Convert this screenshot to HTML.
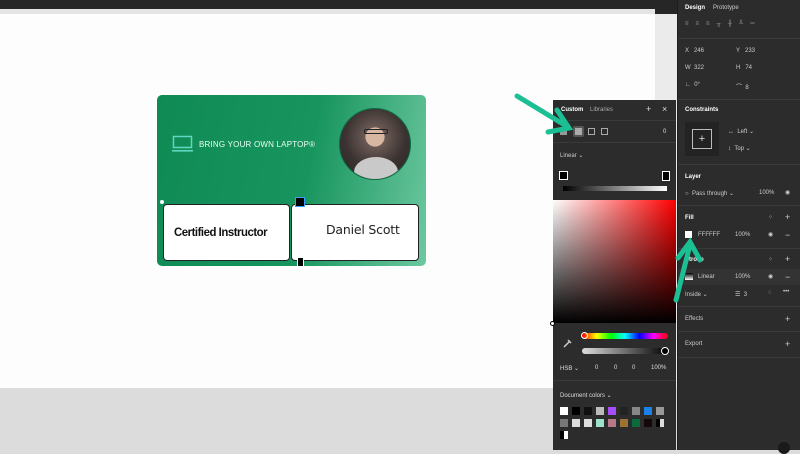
<!DOCTYPE html>
<html><head><meta charset="utf-8"><style>
*{margin:0;padding:0;box-sizing:border-box}
body{width:800px;height:450px;overflow:hidden;background:#dcdcdc;font-family:"Liberation Sans",sans-serif;position:relative}
.a{position:absolute}
.t{color:#ddd;font-size:6px;position:absolute}
.rp .t{color:#ccc}
.h{color:#fff;font-weight:bold;font-size:6px;position:absolute}
</style></head><body>
<div class="a" style="left:0;top:0;width:677px;height:14px;background:#262626"></div>
<div class="a" style="left:0;top:14px;width:655px;height:374px;background:#fdfdfd"></div>
<div class="a" style="left:0;top:9px;width:655px;height:5px;background:#e4e4e4"></div>
<div class="a" style="left:655px;top:14px;width:22px;height:374px;background:#ebebeb"></div>

<!-- card -->
<div class="a" style="left:157px;top:95px;width:269px;height:171px;border-radius:5px;background:linear-gradient(100deg,#0f8a55 0%,#18955e 55%,#6cc8a0 100%)"></div>
<svg class="a" style="left:172px;top:135px" width="22" height="18"><rect x="1.5" y="1.5" width="18" height="11" fill="none" stroke="#5fd8c0" stroke-width="1.5"/><rect x="0" y="15" width="21" height="1.6" fill="#5fd8c0"/></svg>
<div class="a" style="left:199px;top:140px;color:#e8fff4;font-size:8px;letter-spacing:.2px">BRING YOUR OWN LAPTOP®</div>
<div class="a" style="left:339px;top:108px;width:72px;height:72px;border-radius:50%;background:radial-gradient(circle at 50% 40%,#d8b7a2 0 17%,#6b5a55 18%,#3b3331 55%,#2a2424 100%);border:1px solid #0d6b45;overflow:hidden">
<div class="a" style="left:14px;top:48px;width:44px;height:30px;border-radius:50%;background:#c9c9c9"></div>
<div class="a" style="left:24px;top:20px;width:24px;height:5px;border:1.5px solid #222;border-radius:2px"></div></div>
<div class="a" style="left:163px;top:204px;width:127px;height:57px;background:#fff;border:1.5px solid #222;border-radius:4px"></div>
<div class="a" style="left:291px;top:204px;width:128px;height:57px;background:#fff;border:1.5px solid #222;border-radius:4px"></div>
<div class="a" style="left:174px;top:225px;font-size:12px;font-weight:bold;color:#111;letter-spacing:-.5px;transform:scaleX(.95);transform-origin:left">Certified Instructor</div>
<div class="a" style="left:326px;top:222px;font-size:12.5px;color:#222;font-family:'DejaVu Sans',sans-serif;letter-spacing:-.2px">Daniel Scott</div>
<div class="a" style="left:295px;top:197px;width:10px;height:10px;background:#000;border:1.5px solid #3aa0ff"></div>
<div class="a" style="left:297px;top:257px;width:7px;height:10px;background:#000;border:1.5px solid #fff"></div>
<div class="a" style="left:160px;top:200px;width:4px;height:4px;border-radius:50%;background:#fff"></div>

<!-- picker -->
<div class="a" style="left:553px;top:100px;width:123px;height:350px;background:#2c2c2c"></div>
<div class="h" style="left:561px;top:107px">Custom</div>
<div class="t" style="left:590px;top:107px;color:#aaa">Libraries</div>
<div class="t" style="left:646px;top:104px;font-size:9px">+</div>
<div class="t" style="left:662px;top:104px;font-size:9px">×</div>
<div class="a" style="left:553px;top:120px;width:123px;height:1px;background:#3a3a3a"></div>
<div class="a" style="left:560px;top:128px;width:7px;height:7px;background:#999"></div>
<div class="a" style="left:573px;top:126px;width:11px;height:11px;background:#555;border-radius:2px"></div>
<div class="a" style="left:575px;top:128px;width:7px;height:7px;background:#aaa"></div>
<div class="a" style="left:588px;top:128px;width:7px;height:7px;border:1px solid #aaa"></div>
<div class="a" style="left:601px;top:128px;width:7px;height:7px;border:1px solid #aaa"></div>
<div class="t" style="left:663px;top:129px">0</div>
<div class="a" style="left:553px;top:142px;width:123px;height:1px;background:#3a3a3a"></div>
<div class="h" style="left:560px;top:152px;font-weight:normal;color:#ccc">Linear ⌄</div>
<div class="a" style="left:559px;top:171px;width:9px;height:9px;background:#000;border:1.5px solid #fff"></div>
<div class="a" style="left:662px;top:171px;width:8px;height:10px;background:#000;border:1.5px solid #fff"></div>
<div class="a" style="left:563px;top:186px;width:104px;height:5px;background:linear-gradient(90deg,#000,#fff)"></div>
<div class="a" style="left:553px;top:200px;width:123px;height:123px;background:linear-gradient(to top,#000,transparent),linear-gradient(90deg,#fff,#f00)"></div>
<div class="a" style="left:550px;top:321px;width:5px;height:5px;border-radius:50%;border:1px solid #000;background:#fff"></div>
<svg class="a" style="left:563px;top:339px" width="9" height="9"><path d="M1 8L6 3M5 1l3 3" stroke="#ccc" stroke-width="1.5"/></svg>
<div class="a" style="left:582px;top:333px;width:86px;height:6px;border-radius:3px;background:linear-gradient(90deg,#f00,#ff0,#0f0,#0ff,#00f,#f0f,#f00)"></div>
<div class="a" style="left:581px;top:332px;width:7px;height:7px;border-radius:50%;border:1.5px solid #fff"></div>
<div class="a" style="left:582px;top:348px;width:86px;height:6px;border-radius:3px;background:linear-gradient(90deg,#ddd,#000)"></div>
<div class="a" style="left:661px;top:347px;width:8px;height:8px;border-radius:50%;border:1.5px solid #fff;background:#000"></div>
<div class="t" style="left:560px;top:365px">HSB ⌄</div>
<div class="t" style="left:595px;top:365px">0</div>
<div class="t" style="left:614px;top:365px">0</div>
<div class="t" style="left:632px;top:365px">0</div>
<div class="t" style="left:651px;top:365px">100%</div>
<div class="a" style="left:553px;top:380px;width:123px;height:1px;background:#3a3a3a"></div>
<div class="t" style="left:560px;top:392px">Document colors ⌄</div>
<div class="a" style="left:560px;top:407px;width:110px;height:40px">
<div style="display:flex;gap:4px;margin-bottom:4px"><i style="width:8px;height:8px;background:#fff"></i><i style="width:8px;height:8px;background:#000"></i><i style="width:8px;height:8px;background:#111"></i><i style="width:8px;height:8px;background:#bbb"></i><i style="width:8px;height:8px;background:#a64dff"></i><i style="width:8px;height:8px;background:#222"></i><i style="width:8px;height:8px;background:#888"></i><i style="width:8px;height:8px;background:#1a82e6"></i><i style="width:8px;height:8px;background:#999"></i></div>
<div style="display:flex;gap:4px;margin-bottom:4px"><i style="width:8px;height:8px;background:#777"></i><i style="width:8px;height:8px;background:#ddd"></i><i style="width:8px;height:8px;background:#ddd"></i><i style="width:8px;height:8px;background:#9fe0c8"></i><i style="width:8px;height:8px;background:#b57a86"></i><i style="width:8px;height:8px;background:#9c7333"></i><i style="width:8px;height:8px;background:#0b6b3e"></i><i style="width:8px;height:8px;background:#150808"></i><i style="width:8px;height:8px;background:linear-gradient(90deg,#000 50%,#ddd 50%)"></i></div>
<div style="display:flex"><i style="width:8px;height:8px;background:linear-gradient(90deg,#000 50%,#fff 50%)"></i></div></div>

<!-- right panel -->
<div class="a rp" style="left:677px;top:0;width:123px;height:450px;background:#2c2c2c;border-left:1px solid #1e1e1e">
<div class="h" style="left:7px;top:5px">Design</div><div class="t" style="left:35px;top:5px">Prototype</div>
<div class="t" style="left:7px;top:21px;letter-spacing:7px;color:#999">≡≡≡╥╫╨═</div>
<div class="a" style="left:0;top:38px;width:123px;height:1px;background:#3a3a3a"></div>
<div class="t" style="left:7px;top:48px">X&nbsp;&nbsp;&nbsp;246</div><div class="t" style="left:58px;top:48px">Y&nbsp;&nbsp;&nbsp;233</div>
<div class="t" style="left:7px;top:65px">W&nbsp;&nbsp;322</div><div class="t" style="left:58px;top:65px">H&nbsp;&nbsp;&nbsp;74</div>
<div class="t" style="left:7px;top:82px">∟&nbsp;&nbsp;0°</div><div class="t" style="left:58px;top:82px">⌒&nbsp;&nbsp;8</div>
<div class="a" style="left:0;top:99px;width:123px;height:1px;background:#3a3a3a"></div>
<div class="h" style="left:7px;top:107px">Constraints</div>
<div class="a" style="left:7px;top:122px;width:34px;height:34px;background:#232323"></div>
<div class="a" style="left:14px;top:129px;width:20px;height:20px;border:1px solid #bbb;color:#ddd;font-size:11px;text-align:center;line-height:18px">+</div>
<div class="t" style="left:50px;top:128px">↔&nbsp;&nbsp;Left ⌄</div><div class="t" style="left:50px;top:145px">↕&nbsp;&nbsp;Top ⌄</div>
<div class="a" style="left:0;top:164px;width:123px;height:1px;background:#3a3a3a"></div>
<div class="h" style="left:7px;top:174px">Layer</div>
<div class="t" style="left:7px;top:190px">○&nbsp;&nbsp;Pass through ⌄</div><div class="t" style="left:81px;top:190px">100%</div><div class="t" style="left:107px;top:189px">◉</div>
<div class="a" style="left:0;top:205px;width:123px;height:1px;background:#3a3a3a"></div>
<div class="h" style="left:7px;top:215px">Fill</div><div class="t" style="left:90px;top:214px">⁘</div><div class="t" style="left:107px;top:212px;font-size:9px">+</div>
<div class="a" style="left:7px;top:231px;width:7px;height:7px;background:#fff"></div>
<div class="t" style="left:20px;top:232px">FFFFFF</div><div class="t" style="left:57px;top:232px">100%</div><div class="t" style="left:90px;top:231px">◉</div><div class="t" style="left:107px;top:230px;font-size:9px">−</div>
<div class="a" style="left:0;top:248px;width:123px;height:1px;background:#3a3a3a"></div>
<div class="h" style="left:7px;top:257px">Stroke</div><div class="t" style="left:90px;top:256px">⁘</div><div class="t" style="left:107px;top:254px;font-size:9px">+</div>
<div class="a" style="left:0;top:269px;width:123px;height:16px;background:#333"></div>
<div class="a" style="left:7px;top:273px;width:8px;height:7px;background:linear-gradient(#000,#fff)"></div>
<div class="t" style="left:20px;top:274px">Linear</div><div class="t" style="left:57px;top:274px">100%</div><div class="t" style="left:90px;top:273px">◉</div><div class="t" style="left:107px;top:272px;font-size:9px">−</div>
<div class="t" style="left:7px;top:291px">Inside ⌄</div><div class="t" style="left:57px;top:291px">☰&nbsp;&nbsp;3</div><div class="t" style="left:90px;top:290px">◌</div><div class="t" style="left:105px;top:289px">•••</div>
<div class="a" style="left:0;top:306px;width:123px;height:1px;background:#3a3a3a"></div>
<div class="t" style="left:7px;top:316px">Effects</div><div class="t" style="left:107px;top:314px;font-size:9px">+</div>
<div class="a" style="left:0;top:331px;width:123px;height:1px;background:#3a3a3a"></div>
<div class="t" style="left:7px;top:341px">Export</div><div class="t" style="left:107px;top:339px;font-size:9px">+</div>
<div class="a" style="left:0;top:357px;width:123px;height:1px;background:#3a3a3a"></div>
<div class="a" style="left:100px;top:442px;width:12px;height:12px;border-radius:50%;background:#1a1a1a"></div>
</div>

<!-- arrows -->
<svg class="a" style="left:0;top:0" width="800" height="450"><g stroke="#1bbf93" stroke-width="5" stroke-linecap="round" fill="none">
<path d="M517 96L568 127M557 110L569 128L548 132"/>
<path d="M676 300L690 245M678 258L690 242L700 260"/></g></svg>
</body></html>
